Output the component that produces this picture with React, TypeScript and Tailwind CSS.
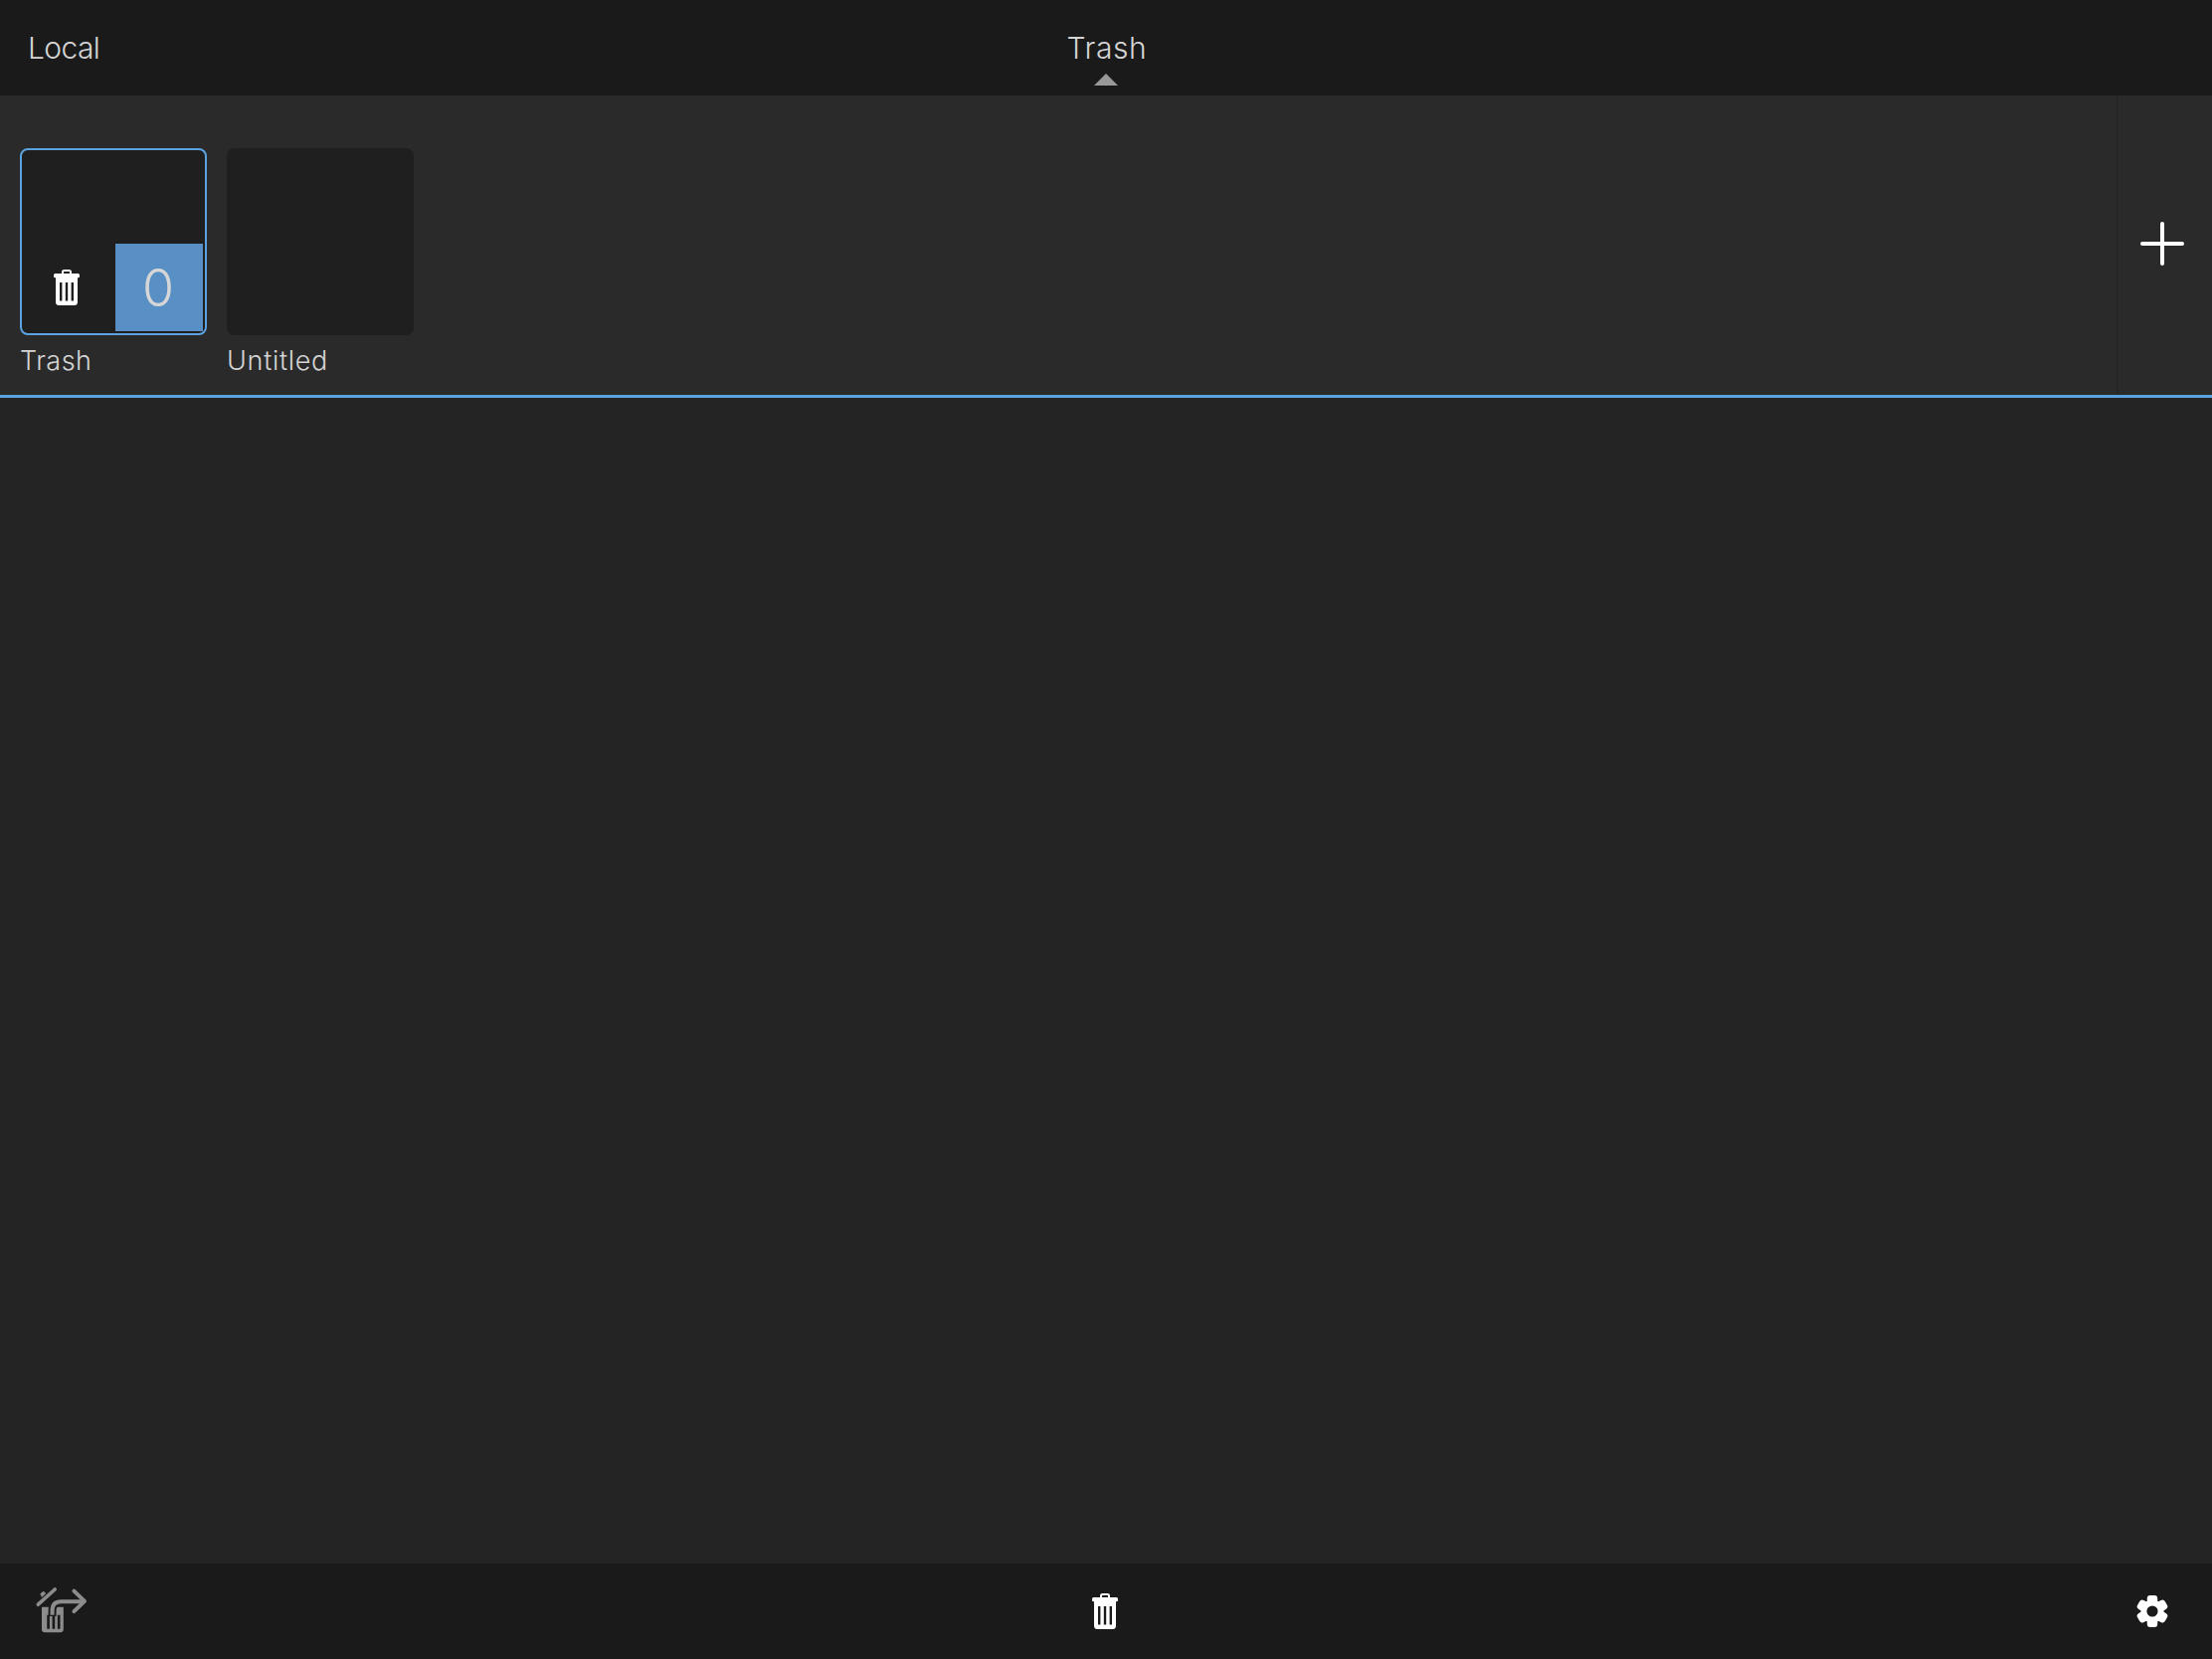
import React from 'react';

// Trash can used on the shelf tile and in the bottom bar
function TrashIcon({ className = '' }: { className?: string }) {
  return (
    <svg viewBox="0 0 26 36" className={className}>
      <path d="M9 4.500V2.500A1.500 1.500 0 0 1 10.500 1H15.500A1.500 1.500 0 0 1 17 2.500V4.500" fill="none" stroke="#fff" strokeWidth="2" />
      <rect x="0" y="4" width="26" height="4.200" rx="1.500" fill="#fff" />
      <path
        fillRule="evenodd"
        fill="#fff"
        d="M2 8H24V32.500A3.500 3.500 0 0 1 20.500 36H5.500A3.500 3.500 0 0 1 2 32.500ZM6 13V31.500H8.400V13ZM11.800 13V31.500H14.200V13ZM17.600 13V31.500H20V13Z"
      />
    </svg>
  );
}

function GearIcon({ className = '' }: { className?: string }) {
  return (
    <svg viewBox="0 0 32 32" className={className}>
      <g fill="#fff">
        <circle cx="16" cy="16" r="11.500" />
        <rect x="10.800" y="0" width="10.400" height="32" rx="3.200" />
        <rect x="10.800" y="0" width="10.400" height="32" rx="3.200" transform="rotate(60 16 16)" />
        <rect x="10.800" y="0" width="10.400" height="32" rx="3.200" transform="rotate(120 16 16)" />
      </g>
      <circle cx="16" cy="16" r="5.600" fill="#1a1a1a" />
    </svg>
  );
}

// Trash can with tilted lid and an arrow coming out of it
function RestoreIcon({ className = '' }: { className?: string }) {
  return (
    <svg viewBox="105 135 160 145" className={className}>
      <path d="M115 190L166 144" stroke="#8c8c8c" strokeWidth="11" strokeLinecap="round" fill="none" />
      <path d="M126 168L139 156L131 149L121 158Z" fill="#8c8c8c" />
      <path
        fillRule="evenodd"
        fill="#8c8c8c"
        d="M126 198H192V265A10 10 0 0 1 182 275H136A10 10 0 0 1 126 265ZM142 222V264H150V222ZM158 222V264H166V222ZM174 222V264H182V222Z"
      />
      <path d="M158 226V208Q158 181 185 181H250" stroke="#1a1a1a" strokeWidth="24" fill="none" />
      <path d="M158 222V208Q158 181 185 181H252" stroke="#8c8c8c" strokeWidth="12" fill="none" />
      <path d="M224 149L256 180L224 211" stroke="#8c8c8c" strokeWidth="12" strokeLinecap="round" strokeLinejoin="round" fill="none" />
    </svg>
  );
}

export default function App() {
  return (
    <div className="w-[2224px] h-[1668px] flex flex-col bg-[#242424] overflow-hidden font-['Inter','Liberation_Sans',sans-serif] text-[#d4d4d4]">
      {/* Top bar */}
      <div className="h-24 shrink-0 bg-[#1a1a1a] grid grid-cols-[1fr_auto_1fr]">
        <div className="pl-7 pt-[30px] text-[30px] leading-9 font-light tracking-[-0.6px]">Local</div>
        <div className="flex flex-col items-center pt-[30px] pl-0.5">
          <div className="text-[30px] leading-9 font-light tracking-[0.6px]">Trash</div>
          <div className="mt-2 mr-0.5 w-0 h-0 border-x-12 border-x-transparent border-b-12 border-b-[#999999]" />
        </div>
        <div />
      </div>

      {/* Shelf */}
      <div className="h-[304px] shrink-0 bg-[#2a2a2a] border-b-[3px] border-[#5aa2e0] flex">
        <div className="flex-1 flex gap-5 pl-5 pt-[53px]">
          <div className="w-[188px]">
            <div className="h-[188px] rounded-lg border-2 border-[#5aa2e0] bg-[#1f1f1f] p-0.5 flex items-end">
              <div className="flex-1 flex justify-center items-center h-[88px] pr-1">
                <TrashIcon className="w-[26px] h-9 mr-[3px]" />
              </div>
              <div className="w-[88px] h-[88px] bg-[#5890c5] flex items-center justify-center pt-0.5 pr-0.5 text-[52px] font-light text-[#d6d6d6]">0</div>
            </div>
            <div className="mt-2.5 text-[27px] leading-8 font-light tracking-[0.5px]">Trash</div>
          </div>
          <div className="w-[188px]">
            <div className="h-[188px] rounded-lg bg-[#1f1f1f]" />
            <div className="mt-2.5 text-[27px] leading-8 font-light tracking-[0.7px]">Untitled</div>
          </div>
        </div>
        <div className="w-[96px] shrink-0 border-l-2 border-[#252525] flex items-center justify-center">
          <svg viewBox="0 0 44 44" className="w-11 h-11 mr-1.5 mb-1">
            <path d="M22 2V42M2 22H42" stroke="#fff" strokeWidth="4" strokeLinecap="round" />
          </svg>
        </div>
      </div>

      {/* Empty content */}
      <div className="flex-1" />

      {/* Bottom bar */}
      <div className="h-24 shrink-0 bg-[#1a1a1a] grid grid-cols-[1fr_auto_1fr] items-start">
        <div className="pl-[35px] pt-[23px]">
          <RestoreIcon className="w-[53px] h-12" />
        </div>
        <div className="pt-[30px] pr-0.5">
          <TrashIcon className="w-[26px] h-9" />
        </div>
        <div className="flex justify-end pr-11 pt-8">
          <GearIcon className="w-8 h-8" />
        </div>
      </div>
    </div>
  );
}
